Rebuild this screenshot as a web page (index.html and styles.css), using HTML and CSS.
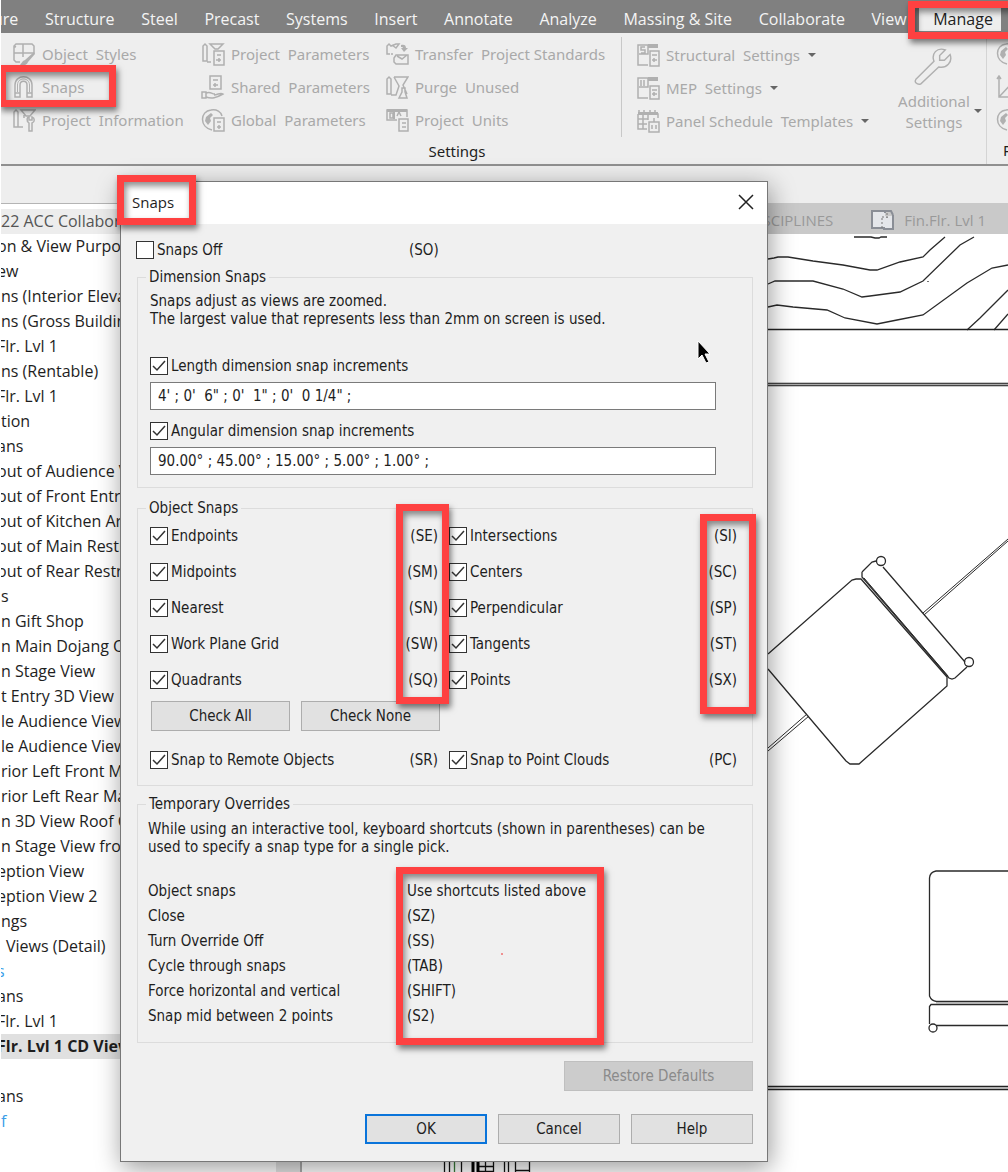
FILE: index.html
```html
<!DOCTYPE html>
<html lang="en">
<head>
<meta charset="utf-8">
<title>Snaps</title>
<link rel="stylesheet" href="styles.css">
</head>
<body>
<svg class="defs" aria-hidden="true">
  <symbol id="i-styles" viewBox="0 0 24 24"><path d="M2 11V4l2-2h7v9zM11 2h9l2 2v7H11M2 11v7l2 2h4M11 11v4M4 5l-2-1"/><path class="fill" d="M22 10l-9 8-2 1-3 4c4 1 7 0 8-3l7-8z"/></symbol>
  <symbol id="i-magnet" viewBox="0 0 24 24"><path d="M3 22V10C3-1 20-1 20 10v12h-5V10c0-5-7-5-7 0v12zM3 18h5M15 18h5"/><path d="M5.500 17V10c0-8 12-8 12 0v7" stroke-width="1"/></symbol>
  <symbol id="i-info" viewBox="0 0 24 24"><path d="M2 19V4l2-2 2 2v15zM6 19h5M9 2h14l-5 6h-4zM12 7v3"/><path d="M17 23v-8c-3-2-2-6 0-6v3h3V9c3 1 3 5 0 6v8z"/></symbol>
  <symbol id="i-param" viewBox="0 0 24 24"><path d="M2 19V4l2-2 2 2v15zM6 20h4M9 2h13l-5 5h-3zM13 9h10v14H13zM16 13h4M15 18h5M18 16v4"/></symbol>
  <symbol id="i-shared" viewBox="0 0 24 24"><path d="M9 1h11v13H9zM12 5h5M12 10h5M14 8v4M1 17h4v6H1zM5 18c5-2 5 1 9 1M5 22c6 2 10 1 17-3-3-2-5 1-9 1"/></symbol>
  <symbol id="i-global" viewBox="0 0 24 24"><path d="M11 22C-2 19-1 3 10 2c6-1 10 2 11 6M13 10h10v13H13zM16 14h4M16 19h4M18 17v4"/><path class="fill" d="M5 9l5-4 2 2-3 3 1 3-3 4-3-4z"/></symbol>
  <symbol id="i-transfer" viewBox="0 0 24 24"><path d="M5 12H2V4l2-2 2 2 5-2h3L11 6 7 3M11 13h12v9H11l-2-2v-4zM12 14l5 3 5-4M6 12h2"/><path class="fill" d="M16 3c3-1 5 0 5 3h2l-4 4-3-4h2c0-1-1-1-2-1z"/></symbol>
  <symbol id="i-purge" viewBox="0 0 24 24"><path d="M2 19V4l2-2 2 2v15zM9 2h14l-5 8 4 9M9 2l5 9-3 9H6M14 23h8l-2-6v-4h-3v4z"/></symbol>
  <symbol id="i-units" viewBox="0 0 24 24"><path d="M12 12H2V2h20v7M5 5v5h3V5zM12 8l2-4 2 4M14 11h9v12h-9zM17 15h4M17 19h4"/><path class="fill" d="M2 1h20v3H2zM8 4h2v7H8z"/></symbol>
  <symbol id="i-struct" viewBox="0 0 24 24"><path d="M12 22H2V2h10v9H3M9 4H5v3h4v3H5M14 8h9v15h-9zM16 12h5M16 17h5M18 15v4"/><path class="fill" d="M12 1h10v4H12z"/></symbol>
  <symbol id="i-mep" viewBox="0 0 24 24"><path d="M12 22H2V2h10v9H3M5 10V4M8 10V4M14 10h9v13h-9zM16 14h5M16 18h5M18 16v4"/><path class="fill" d="M12 1h10v4H12z"/></symbol>
  <symbol id="i-panel" viewBox="0 0 24 24"><path d="M2 5v15h9M2 5h20v4M2 10h10M2 15h9M7 5v15M12 5v6M3 1v4M8 1v4M14 1v4M19 1v4M13 13h10v10H13zM16 16v4M20 16v4M18 9v4"/><path class="fill" d="M2 3h20v3H2z"/></symbol>
  <symbol id="i-wrench" viewBox="0 0 40 40"><path d="M2 34l19-19C18 7 24 0 33 3l-6 6v5h5l6-6c3 8-4 15-12 13L7 39c-4 1-7-2-5-5z"/></symbol>
  <symbol id="i-axis" viewBox="0 0 24 24"><path d="M3 2v20h19M1 4l2-3 2 3M3 22L18 6"/></symbol>
</svg>

<div class="page">
  <nav class="tabs" aria-label="Ribbon tabs">
    <a href="#">ure</a><a href="#">Structure</a><a href="#">Steel</a><a href="#">Precast</a><a href="#">Systems</a><a href="#">Insert</a><a href="#">Annotate</a><a href="#">Analyze</a><a href="#">Massing &amp; Site</a><a href="#">Collaborate</a><a href="#">View</a><a href="#" class="current" aria-current="page">Manage<span class="mark mark-manage"></span></a>
  </nav>

  <div class="ribbon">
    <section class="group">
      <div class="tools">
        <div class="col col-a">
          <button class="tool"><svg><use href="#i-styles"/></svg>Object  Styles</button>
          <button class="tool"><svg><use href="#i-magnet"/></svg>Snaps<span class="mark mark-snaps"></span></button>
          <button class="tool"><svg><use href="#i-info"/></svg>Project  Information</button>
        </div>
        <div class="col col-b">
          <button class="tool"><svg><use href="#i-param"/></svg>Project  Parameters</button>
          <button class="tool"><svg><use href="#i-shared"/></svg>Shared  Parameters</button>
          <button class="tool"><svg><use href="#i-global"/></svg>Global  Parameters</button>
        </div>
        <div class="col col-c">
          <button class="tool"><svg><use href="#i-transfer"/></svg>Transfer  Project Standards</button>
          <button class="tool"><svg><use href="#i-purge"/></svg>Purge  Unused</button>
          <button class="tool"><svg><use href="#i-units"/></svg>Project  Units</button>
        </div>
        <div class="col col-d">
          <button class="tool"><svg><use href="#i-struct"/></svg>Structural  Settings<i class="drop"></i></button>
          <button class="tool"><svg><use href="#i-mep"/></svg>MEP  Settings<i class="drop"></i></button>
          <button class="tool"><svg><use href="#i-panel"/></svg>Panel Schedule  Templates<i class="drop"></i></button>
        </div>
        <button class="big"><svg><use href="#i-wrench"/></svg><span>Additional<br>Settings</span><i class="drop"></i></button>
      </div>
      <h2 class="group-name">Settings</h2>
    </section>
    <section class="group next">
      <div class="tools">
        <div class="col">
          <button class="tool" aria-label="Location"><svg><use href="#i-global"/></svg></button>
          <button class="tool" aria-label="Coordinates"><svg><use href="#i-axis"/></svg></button>
          <button class="tool" aria-label="Position"><svg><use href="#i-global"/></svg></button>
        </div>
      </div>
      <h2 class="group-name">P</h2>
    </section>
  </div>

  <div class="workspace">
    <aside class="browser">
      <ul>
        <li class="head">22 ACC Collabor</li>
        <li class="cut">on &amp; View Purpo</li>
        <li class="cut">ew</li>
        <li>ns (Interior Eleva</li>
        <li>ns (Gross Buildin</li>
        <li class="cut">Flr. Lvl 1</li>
        <li>ns (Rentable)</li>
        <li class="cut">Flr. Lvl 1</li>
        <li>tion</li>
        <li class="cut">ans</li>
        <li class="cut">out of Audience V</li>
        <li class="cut">out of Front Entry</li>
        <li class="cut">out of Kitchen Ar</li>
        <li class="cut">out of Main Restr</li>
        <li class="cut">out of Rear Restro</li>
        <li>s</li>
        <li>n Gift Shop</li>
        <li>n Main Dojang O</li>
        <li>n Stage View</li>
        <li>t Entry 3D View</li>
        <li>le Audience View</li>
        <li>le Audience View</li>
        <li>rior Left Front Ma</li>
        <li>rior Left Rear Mai</li>
        <li>n 3D View Roof C</li>
        <li>n Stage View fror</li>
        <li class="cut">eption View</li>
        <li class="cut">eption View 2</li>
        <li>ngs</li>
        <li class="inset">Views (Detail)</li>
        <li class="cut blue">s</li>
        <li class="cut">ans</li>
        <li class="cut">Flr. Lvl 1</li>
        <li class="cut active">Flr. Lvl 1 CD View</li>
        <li></li>
        <li class="cut">ans</li>
        <li class="blue">f</li>
      </ul>
      <div class="scroll"></div>
    </aside>
    <main class="view">
      <div class="doc-tabs">
        <span class="doc-a">DISCIPLINES</span>
        <svg class="sheet" viewBox="0 0 24 22"><path d="M1 2h13v5h8v12H1z" fill="#e4e6ea"/><path d="M13 2H1v17h11M14 1v3M22 6v14h-9v-2M15 2h5l2 4" stroke="#8a8e96" fill="none" stroke-width="2"/><path d="M11 9v10M11 8h8M16 4v5" stroke="#777" fill="none" stroke-dasharray="2 2"/></svg>
        <span>Fin.Flr. Lvl 1</span>
      </div>
      <svg class="plan" viewBox="302 234 706 938" preserveAspectRatio="xMinYMin slice" fill="none" stroke="#2a2a2a" stroke-width="1.300">
        <path d="M854 237h17l4 1h4l2-1h6M768 259l6-1 4-1h10l25 4 30 4 27 5h7l23-8 23-5 7-7 15-13M768 284l7-3h38l30 8 19 8 8-1 30-4 23-11 37-36 14-8M768 307l9-2 16 2 34 3 18 8 32 6 20-4 26-5 44-32 25-15 16-3M967 330l13-12 28-28M994 330l14-16M928 281v1"/>
        <path d="M302 329.500H1008M302 383.500H1008M302 385.500H1008M302 1086.500H1008M302 1089.500H1008" stroke="#222"/>
        <path d="M302 384.500H1008M302 1088H1008" stroke="#aaa"/>
        <path d="M768 654l84-74 4-1h5l86 98v9l-88 78h-9l-4-3-78-92"/>
        <path d="M862 572l10-10 4-1M883 567l82 95M967 667l-12 11-3 1-3-1-87-101v-5" />
        <path d="M864 578l84 98" stroke-width="1"/>
        <circle cx="881" cy="561" r="4.500"/><circle cx="969" cy="662" r="4.500"/>
        <path d="M923 613l85-74M924 615l84-74M768 748l39-34M768 751l41-35" stroke-width="1"/>
        <path d="M1008 871H936q-6 1-6.500 7V996q2 5 7 5.500h72M1008 1004.500H931l-1.500 2V1024M1008 1025.500H936"/>
        <path d="M1008 1003H936" stroke="#aaa"/>
        <circle cx="933" cy="1028" r="4"/>
        <path d="M444.500 1160v12M449.500 1160v12M461.500 1160v12M485.500 1160v12M493.500 1160v12M504.500 1160v12M508.500 1160v12M515.500 1160v12M529.500 1160v12M478 1166.500h16M478 1171.500h16M516 1170.500h14" stroke="#111"/>
        <path d="M473 1160v12M478 1160v12" stroke="#000" stroke-width="3"/>
        <path d="M454.500 1160v12" stroke="#3a7a3a"/>
      </svg>
    </main>
  </div>

  <div class="dialog" role="dialog" aria-labelledby="dlg-title">
    <header class="title">
      <h1 id="dlg-title">Snaps</h1>
      <button class="close" aria-label="Close"><svg viewBox="0 0 16 16"><path d="M1 1l14 14M15 1L1 15"/></svg></button>
      <span class="mark mark-title"></span>
    </header>
    <form class="body">
      <div class="off"><label class="check"><input type="checkbox">Snaps Off</label><span>(SO)</span></div>

      <fieldset class="dims">
        <legend>Dimension Snaps</legend>
        <p>Snaps adjust as views are zoomed.<br>The largest value that represents less than 2mm on screen is used.</p>
        <label class="check"><input type="checkbox" checked>Length dimension snap increments</label>
        <input class="field" type="text" aria-label="Length increments" value="4' ; 0'  6&quot; ; 0'  1&quot; ; 0'  0 1/4&quot; ;">
        <label class="check"><input type="checkbox" checked>Angular dimension snap increments</label>
        <input class="field" type="text" aria-label="Angular increments" value="90.00° ; 45.00° ; 15.00° ; 5.00° ; 1.00° ;">
      </fieldset>

      <fieldset class="objects">
        <legend>Object Snaps</legend>
        <div class="pair">
          <div class="list">
            <div class="row"><label class="check"><input type="checkbox" checked>Endpoints</label><span>(SE)</span></div>
            <div class="row"><label class="check"><input type="checkbox" checked>Midpoints</label><span>(SM)</span></div>
            <div class="row"><label class="check"><input type="checkbox" checked>Nearest</label><span>(SN)</span></div>
            <div class="row"><label class="check"><input type="checkbox" checked>Work Plane Grid</label><span>(SW)</span></div>
            <div class="row"><label class="check"><input type="checkbox" checked>Quadrants</label><span>(SQ)</span></div>
            <span class="mark mark-left"></span>
          </div>
          <div class="list">
            <div class="row"><label class="check"><input type="checkbox" checked>Intersections</label><span>(SI)</span></div>
            <div class="row"><label class="check"><input type="checkbox" checked>Centers</label><span>(SC)</span></div>
            <div class="row"><label class="check"><input type="checkbox" checked>Perpendicular</label><span>(SP)</span></div>
            <div class="row"><label class="check"><input type="checkbox" checked>Tangents</label><span>(ST)</span></div>
            <div class="row"><label class="check"><input type="checkbox" checked>Points</label><span>(SX)</span></div>
            <span class="mark mark-right"></span>
          </div>
        </div>
        <div class="picks"><button type="button" class="btn">Check All</button><button type="button" class="btn">Check None</button></div>
        <div class="pair remote">
          <div class="row"><label class="check"><input type="checkbox" checked>Snap to Remote Objects</label><span>(SR)</span></div>
          <div class="row"><label class="check"><input type="checkbox" checked>Snap to Point Clouds</label><span>(PC)</span></div>
        </div>
      </fieldset>

      <fieldset class="overrides">
        <legend>Temporary Overrides</legend>
        <p>While using an interactive tool, keyboard shortcuts (shown in parentheses) can be<br>used to specify a snap type for a single pick.</p>
        <div class="keys">
          <dl>
            <dt>Object snaps</dt><dd>Use shortcuts listed above</dd>
            <dt>Close</dt><dd>(SZ)</dd>
            <dt>Turn Override Off</dt><dd>(SS)</dd>
            <dt>Cycle through snaps</dt><dd>(TAB)</dd>
            <dt>Force horizontal and vertical</dt><dd>(SHIFT)</dd>
            <dt>Snap mid between 2 points</dt><dd>(S2)</dd>
          </dl>
          <span class="mark mark-keys"></span>
        </div>
      </fieldset>

      <div class="restore"><button type="button" class="btn" disabled>Restore Defaults</button></div>
      <div class="actions"><button type="button" class="btn default">OK</button><button type="button" class="btn">Cancel</button><button type="button" class="btn">Help</button></div>
    </form>
    <svg class="pointer" viewBox="0 0 14 24"><path d="M1 1v18l4-4 4 8 3-1-4-8h5z" fill="#000" stroke="#fff" stroke-width="1"/></svg>
  </div>
</div>
</body>
</html>
```
FILE: styles.css
```css
* { box-sizing: border-box; }

body {
  margin: 0;
  background: #eee;
  color: #1e1e1e;
  font: 15px/18px "Noto Sans", "Open Sans", sans-serif;
}

h1, h2, p, ul, dl, dd { margin: 0; padding: 0; font-weight: 400; }
ul { list-style: none; }
button, input { font: inherit; color: inherit; }
.defs { display: none; }

.page {
  position: relative;
  display: flex;
  flex-direction: column;
  min-height: 100vh;
  overflow: hidden;
  border-left: 1px solid #fff;
}

/* red call-out frames */
.mark {
  position: absolute;
  z-index: 5;
  border: 7px solid #fe4141;
  box-shadow: 2px 4px 6px rgba(0, 0, 0, .5), inset 2px 4px 6px rgba(0, 0, 0, .45);
  pointer-events: none;
}
.mark-manage { inset: -6px -19px -8px -11px; }
.mark-snaps { inset: -5px -32px -4px -13px; }
.mark-title { left: -4px; top: -7px; width: 79px; height: 50px; }
.mark-left { right: -11px; top: -14px; bottom: -6px; width: 53px; }
.mark-right { right: -19px; top: -4px; bottom: -16px; width: 56px; }
.mark-keys { left: 248px; top: -12px; bottom: -16px; width: 208px; }
.mark-keys::after {
  content: "";
  position: absolute;
  left: 98px;
  top: 79px;
  width: 2px;
  height: 2px;
  background: #f09090;
}

/* ribbon tabs */
.tabs {
  display: flex;
  justify-content: space-between;
  align-items: flex-end;
  height: 33px;
  padding: 0 7px 2px 0;
  background: #808080;
}
.tabs a {
  position: relative;
  font-family: "Open Sans", "Noto Sans", sans-serif;
  font-size: 16px;
  line-height: 24px;
  color: #f4f4f4;
  text-decoration: none;
  white-space: nowrap;
}
.tabs a:first-child { margin-left: -8px; }
.tabs .current {
  padding: 0 8px 0 14px;
  margin-left: -14px;
  background: #eee;
  color: #222;
}

/* ribbon */
.ribbon {
  display: flex;
  height: 133px;
  border-bottom: 2px solid #909090;
  background: #eee;
}
.group { flex: none; padding: 4px 0 0 11px; }
.group.next {
  flex: 1 1 0;
  min-width: 0;
  overflow: hidden;
  padding-left: 9px;
  border-left: 1px solid #d4d4d4;
}
.tools { display: flex; }
.col { display: flex; flex-direction: column; align-items: flex-start; }
.col-a { width: 189px; }
.col-b { width: 184px; }
.col-c { width: 237px; border-right: 1px solid #c8c8c8; }
.col-d { width: 260px; padding: 1px 0 0 14px; }
.tool {
  position: relative;
  display: flex;
  align-items: center;
  height: 33px;
  padding: 0;
  border: 0;
  background: none;
  color: #a9a9a9;
  white-space: pre;
}
.tool svg { flex: none; width: 24px; height: 24px; margin-right: 6px; }
.tool svg, .big svg { fill: none; stroke: #b0b0b0; stroke-width: 1.5; }
.fill { fill: #b0b0b0; stroke: none; }
.drop {
  border: 4px solid transparent;
  border-top-color: #666;
  border-bottom: 0;
  margin-left: 8px;
}
.big {
  position: relative;
  width: 104px;
  padding: 4px 0 0;
  border: 0;
  background: none;
  color: #a9a9a9;
  line-height: 21px;
}
.big svg { display: block; width: 38px; height: 40px; margin: 0 auto 5px 32px; }
.big .drop { position: absolute; right: 4px; bottom: 24px; }
.group-name { padding-right: 84px; font-size: 15px; line-height: 28px; text-align: center; }
.next .group-name { padding: 0 0 0 7px; text-align: left; }

/* project browser and plan view */
.workspace {
  display: grid;
  grid-template-columns: 301px 1fr;
  flex: 1;
  margin-top: 37px;
}
.browser {
  display: flex;
  border-top: 1px solid #b4b4b4;
  border-right: 2px solid #aaa;
  background: #fff;
  font-family: "Open Sans", "Noto Sans", sans-serif;
}
.browser ul { flex: 1; min-width: 0; padding-top: 5px; background: #fff; }
.browser li { height: 25px; font-size: 16px; line-height: 24px; white-space: nowrap; }
.browser .head { background: #ededed; color: #555; }
.browser .cut { text-indent: -4px; }
.browser .inset { text-indent: 5px; }
.browser .blue { color: #3b9ee8; }
.browser .active { background: #e0e0e0; font-weight: 700; }
.scroll { width: 24px; background: #e4e4e4; }
.view { min-width: 0; background: #fff; }
.doc-tabs {
  display: flex;
  align-items: center;
  height: 31px;
  padding: 3px 22px 0 0;
  justify-content: flex-end;
  background: #c9c9c9;
  color: #999;
  font-family: "Open Sans", "Noto Sans", sans-serif;
}
.sheet { width: 24px; height: 22px; margin: 0 9px 0 38px; }
.plan { display: block; width: 100%; height: 938px; }

/* snaps dialog */
.dialog {
  position: absolute;
  left: 119px;
  right: 240px;
  top: 181px;
  border: 1px solid #777;
  background: #f0f0f0;
  box-shadow: 2px 6px 24px rgba(0, 0, 0, .4);
  font-family: "DejaVu Sans Condensed", "DejaVu Sans", sans-serif;
}
.title {
  position: relative;
  display: flex;
  align-items: center;
  justify-content: space-between;
  height: 42px;
  padding: 0 13px 2px 11px;
  background: #fff;
}
.title h1 { font: 15px/18px "Open Sans", "Noto Sans", sans-serif; }
.close { width: 16px; height: 16px; padding: 0; border: 0; background: none; }
.close svg { display: block; fill: none; stroke: #222; stroke-width: 1.5; }
.body { padding: 16px 14px 17px 15px; }
.body span, .body label { white-space: nowrap; }
.off { display: grid; grid-template-columns: 273px auto; align-items: center; }

.check { display: flex; align-items: center; gap: 3px; height: 20px; }
.check input {
  appearance: none;
  flex: none;
  width: 18px;
  height: 18px;
  margin: 0;
  border: 1px solid #333;
  background: #fff;
}
.check input:checked {
  background: #fff url("data:image/svg+xml,%3Csvg xmlns='http://www.w3.org/2000/svg' viewBox='0 0 16 16'%3E%3Cpath d='M2 8l4 4 8-9' fill='none' stroke='%23333' stroke-width='1.5'/%3E%3C/svg%3E");
}

fieldset {
  min-width: 0;
  margin: 8px 0 0 1px;
  padding: 0 15px 0 12px;
  border: 1px solid #dcdcdc;
}
legend { height: 18px; margin-left: -4px; padding: 0 3px; }
.dims { padding-bottom: 12px; }
.dims p { margin: 6px 0 28px; }
.field {
  display: block;
  width: calc(100% - 21px);
  height: 28px;
  margin: 6px 0 11px;
  padding: 0 7px;
  border: 1px solid #7a7a7a;
  background: #fff;
  white-space: pre;
}
.field:last-child { margin-bottom: 0; }

.objects { margin-top: 11px; padding-bottom: 15px; }
.pair { display: grid; grid-template-columns: 1fr 1fr; gap: 11px; margin-top: 1px; }
.list { position: relative; }
.row { display: flex; align-items: center; justify-content: space-between; }
.list .row { height: 36px; }
.picks { display: flex; gap: 11px; margin: 3px 0 19px 1px; }
.picks .btn { width: 139px; }
.pair.remote { margin: 0; }

.overrides { margin-top: 9px; padding: 0 10px 13px; }
.overrides legend { margin-left: -2px; }
.overrides p { margin: 7px 0 23px; }
.keys { position: relative; }
.keys dl { display: grid; grid-template-columns: 259px 1fr; grid-auto-rows: 25px; line-height: 25px; }

.btn {
  height: 30px;
  padding: 0;
  border: 1px solid #adadad;
  background: #e1e1e1;
}
.btn:disabled { border-color: #bfbfbf; background: #ccc; color: #8a8a8a; }
.btn.default { border: 2px solid #0a74da; }
.restore { margin: 18px 0 23px; display: flex; justify-content: flex-end; }
.restore .btn { width: 189px; }
.actions { display: flex; justify-content: flex-end; gap: 11px; }
.actions .btn { width: 122px; }

.pointer { position: absolute; right: 56px; top: 158px; width: 14px; height: 24px; }
```
